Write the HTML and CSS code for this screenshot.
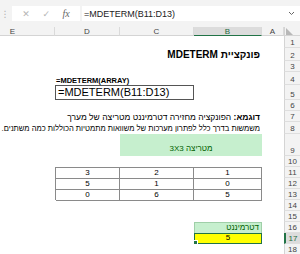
FILE: index.html
```html
<!DOCTYPE html>
<html lang="he">
<head>
    <meta charset="UTF-8">
    <title>MDETERM</title>
    <link rel="stylesheet" href="styles.css">
</head>
<body>

<div class="formula-bar">
    <span class="grip">⋮</span>
    <div class="fx-tools">
        <span class="tool">✕</span>
        <span class="tool">✓</span>
        <span class="tool fx">fx</span>
    </div>
    <div class="fx-input">
        <span class="fx-text">=MDETERM(B11:D13)</span>
        <svg class="chev" width="7" height="5" viewBox="0 0 7 5"><path d="M1 1 L3.5 3.5 L6 1" fill="none" stroke="#666" stroke-width="1"/></svg>
    </div>
</div>

<div class="viewport">
    <div class="sheet">
        <!-- column headers -->
        <div class="colhead">E</div>
        <div class="colhead">D</div>
        <div class="colhead">C</div>
        <div class="colhead active">B</div>
        <div class="colhead">A</div>
        <div class="corner"><svg width="9" height="8" viewBox="0 0 9 8"><polygon points="1,0 1,7 8,7" fill="#b8b8b8"/></svg></div>

        <!-- row headers -->
        <div class="rowhead">1</div>
        <div class="rowhead">2</div>
        <div class="rowhead">3</div>
        <div class="rowhead">4</div>
        <div class="rowhead">5</div>
        <div class="rowhead">6</div>
        <div class="rowhead">7</div>
        <div class="rowhead">8</div>
        <div class="rowhead">9</div>
        <div class="rowhead">10</div>
        <div class="rowhead">11</div>
        <div class="rowhead">12</div>
        <div class="rowhead">13</div>
        <div class="rowhead">14</div>
        <div class="rowhead">15</div>
        <div class="rowhead">16</div>
        <div class="rowhead active">17</div>
        <div class="rowhead">18</div>

        <!-- cells -->
        <div class="cell rtl title">פונקציית MDETERM</div>
        <div class="cell syntax">=MDETERM(ARRAY)</div>
        <div class="cell formula-box">=MDETERM(B11:D13)</div>
        <div class="cell rtl example"><b>דוגמא:</b>&nbsp;הפונקציה מחזירה דטרמיננט מטריצה של מערך</div>
        <div class="cell rtl desc">משמשות בדרך כלל לפתרון מערכות של משוואות מתמטיות הכוללות כמה משתנים.</div>
        <div class="cell rtl matrix-label">מטריצה 3X3</div>

        <div class="matrix">
            <div class="m">3</div><div class="m">2</div><div class="m">1</div>
            <div class="m">5</div><div class="m">1</div><div class="m">0</div>
            <div class="m">0</div><div class="m">6</div><div class="m">5</div>
        </div>

        <div class="cell rtl det-label">דטרמיננט</div>
        <div class="cell det-value">5<span class="handle"></span></div>
    </div>
</div>

</body>
</html>
```

FILE: styles.css
```css
/* Excel sheet, right-to-left, scrolled so column E is cut */
body { margin: 0; width: 300px; height: 254px; overflow: hidden; background: #fff; font-family: 'Liberation Sans', 'DejaVu Sans', Arial, sans-serif; color: #000; }

.formula-bar { height: 27px; background: #f3f3f3; display: flex; align-items: center; gap: 2px; }
.grip { width: 10px; text-align: center; color: #b0b0b0; font-size: 9px; }
.fx-tools { width: 68px; height: 15px; background: #fff; display: flex; align-items: center; justify-content: space-around; padding: 0 4px; box-sizing: border-box; }
.tool { color: #b5b5b5; font-size: 9px; }
.tool.fx { color: #666; font-family: 'Liberation Serif', serif; font-style: italic; font-size: 10px; }
.fx-input { flex: 1; height: 15px; background: #fff; display: flex; align-items: center; justify-content: space-between; padding: 0 5px 0 2px; }
.fx-text { font-size: 9px; color: #222; }

.viewport { overflow: hidden; }
.sheet { margin-left: -29px; display: grid; grid-template-columns: 84px 65px 74px 68px 22px 16px; grid-template-rows: 9px 12px 13px 11px 13px 15px 11px 11px 12px 22px 11px 11px 11px 11px 11px 11px 11px 11px 11px; }

.colhead { grid-row: 1; background: #f3f3f3; border-right: 1px solid #dadada; border-bottom: 1px solid #d4d4d4; font-size: 8px; color: #444; display: flex; align-items: center; justify-content: center; box-sizing: border-box; }
.colhead.active { background: #dcdcdc; color: #1e6b3f; border-bottom: 1px solid #217346; }
.corner { grid-row: 1; grid-column: 6; background: #f3f3f3; border-left: 1px solid #d4d4d4; border-bottom: 1px solid #d4d4d4; display: flex; align-items: flex-start; padding-top: 1px; box-sizing: border-box; }
.rowhead { grid-column: 6; background: #f3f3f3; border-left: 1px solid #d4d4d4; border-bottom: 1px solid #dedede; font-size: 8px; color: #444; display: flex; align-items: flex-end; justify-content: center; box-sizing: border-box; line-height: 9px; }
.rowhead.active { background: #dcdcdc; color: #1e6b3f; border-left: 2px solid #217346; }

.cell { display: flex; align-items: flex-end; white-space: nowrap; font-size: 8px; line-height: 10px; }
.rtl { direction: rtl; justify-content: flex-start; padding-right: 2px; }

.title { grid-row: 3; grid-column: 1 / 5; font-weight: bold; font-size: 10px; line-height: 12px; }
.syntax { grid-row: 5; grid-column: 2 / 4; font-weight: bold; font-size: 7.5px; padding-left: 1px; line-height: 9px; }
.formula-box { grid-row: 6; grid-column: 2 / 4; border: 1px solid #555; font-size: 11px; line-height: 13px; padding-left: 2px; align-items: center; box-sizing: border-box; }
.example { grid-row: 8; grid-column: 1 / 5; font-size: 8.5px; }
.desc { grid-row: 9; grid-column: 1 / 5; font-size: 7.6px; }
.matrix-label { grid-row: 10; grid-column: 3 / 5; background: #c6efce; color: #006100; justify-content: center; padding: 0 0 2px; }

.matrix { grid-row: 12 / 15; grid-column: 2 / 5; display: grid; grid-template-columns: 1fr 74px 68px; border-top: 1px solid #8a8a8a; border-left: 1px solid #8a8a8a; }
.m { border-right: 1px solid #8a8a8a; border-bottom: 1px solid #8a8a8a; font-size: 8px; display: flex; align-items: flex-end; justify-content: center; line-height: 10px; }

.det-label { grid-row: 17; grid-column: 4; background: #c6efce; color: #006100; border: 1px solid #9fcfa8; border-bottom: none; box-sizing: border-box; }
.det-value { grid-row: 18; grid-column: 4; background: #ffff00; justify-content: center; border: 1px solid #217346; box-sizing: border-box; position: relative; }
.handle { position: absolute; left: -2px; bottom: -2px; width: 3px; height: 3px; background: #217346; border: 1px solid #fff; }
```
